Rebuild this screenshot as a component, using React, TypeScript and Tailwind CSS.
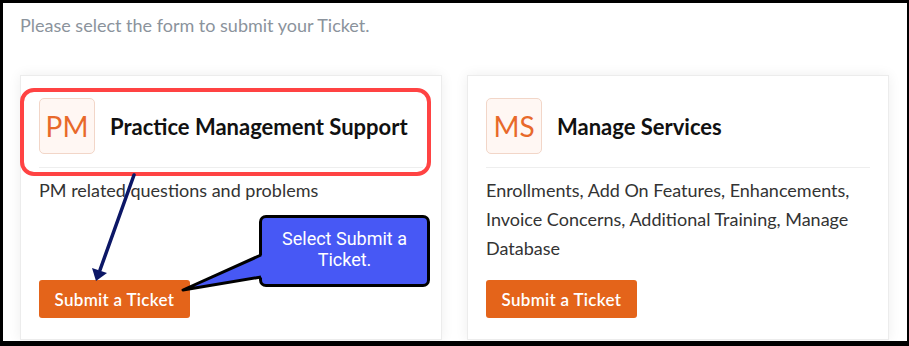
const cards = [
  {
    badge: "PM",
    title: "Practice Management Support",
    desc: "PM related questions and problems",
  },
  {
    badge: "MS",
    title: "Manage Services",
    desc: "Enrollments, Add On Features, Enhancements, Invoice Concerns, Additional Training, Manage Database",
  },
];

function TicketCard({ badge, title, desc }: { badge: string; title: string; desc: string }) {
  return (
    <div className="flex flex-col border border-[#ececec] bg-white px-[18px] pt-[22px] pb-[21px] shadow-[0_0_12px_rgba(0,0,0,0.07)]">
      {/* Header */}
      <div className="flex items-center gap-[15px]">
        <div className="flex h-[56px] w-[56px] items-center justify-center rounded-[5px] border border-[#f2d6c8] bg-[#fff7f3] text-[28px] text-[#e8692a]">
          {badge}
        </div>
        <h2 className="text-[22px] font-bold text-[#111]">{title}</h2>
      </div>
      <div className="mt-[13px] border-t border-[#eeeeee]" />

      {/* Description */}
      <p className="mt-2 mb-[18px] flex-1 text-[18px] leading-[28.8px] text-[#333]">{desc}</p>

      {/* CTA */}
      <div>
        <button className="h-[38px] rounded-[3px] bg-[#e4641a] px-[15.5px] text-[17px] font-semibold tracking-[0.3px] text-white">
          Submit a Ticket
        </button>
      </div>
    </div>
  );
}

export default function App() {
  return (
    <div
      className="relative h-[346px] w-[909px] overflow-hidden border-t-[3px] border-r-2 border-b-[5px] border-l-[3px] border-black bg-white pt-[10px] pr-[18px] pl-[17px]"
      style={{ fontFamily: "Lato, 'Noto Sans', sans-serif" }}
    >
      <p className="mb-[38px] text-[18px] leading-6 text-[#8b939c]">
        Please select the form to submit your Ticket.
      </p>

      <div className="grid grid-cols-2 gap-[25px]">
        {cards.map((c) => (
          <TicketCard key={c.badge} {...c} />
        ))}
      </div>

      {/* Annotation: callout box */}
      <div className="absolute top-[212px] left-[256px] flex h-[72px] w-[171px] items-start justify-center rounded-[7px] border-[3px] border-black bg-[#4758f5] px-2 pt-[10px] text-center text-[18px] leading-[21px] text-white [font-family:Roboto,sans-serif]">
        Select Submit a Ticket.
      </div>

      {/* Annotation: highlight, arrow, callout tail */}
      <svg className="pointer-events-none absolute top-[-3px] left-[-3px] h-[346px] w-[909px]" viewBox="0 0 909 346">
        <rect x="22" y="90" width="407" height="84" rx="12" fill="none" stroke="#ff4343" strokeWidth="4" />
        <line x1="134" y1="175" x2="100" y2="270" stroke="#0c1766" strokeWidth="3.5" strokeLinecap="round" />
        <polygon points="96,281 92,268 107,273" fill="#0c1766" />
        <polygon points="265,254 183,290 265,277" fill="#4758f5" />
        <polyline points="261,255 183,290 261,277" fill="none" stroke="#000" strokeWidth="3" strokeLinejoin="round" />
      </svg>
    </div>
  );
}
